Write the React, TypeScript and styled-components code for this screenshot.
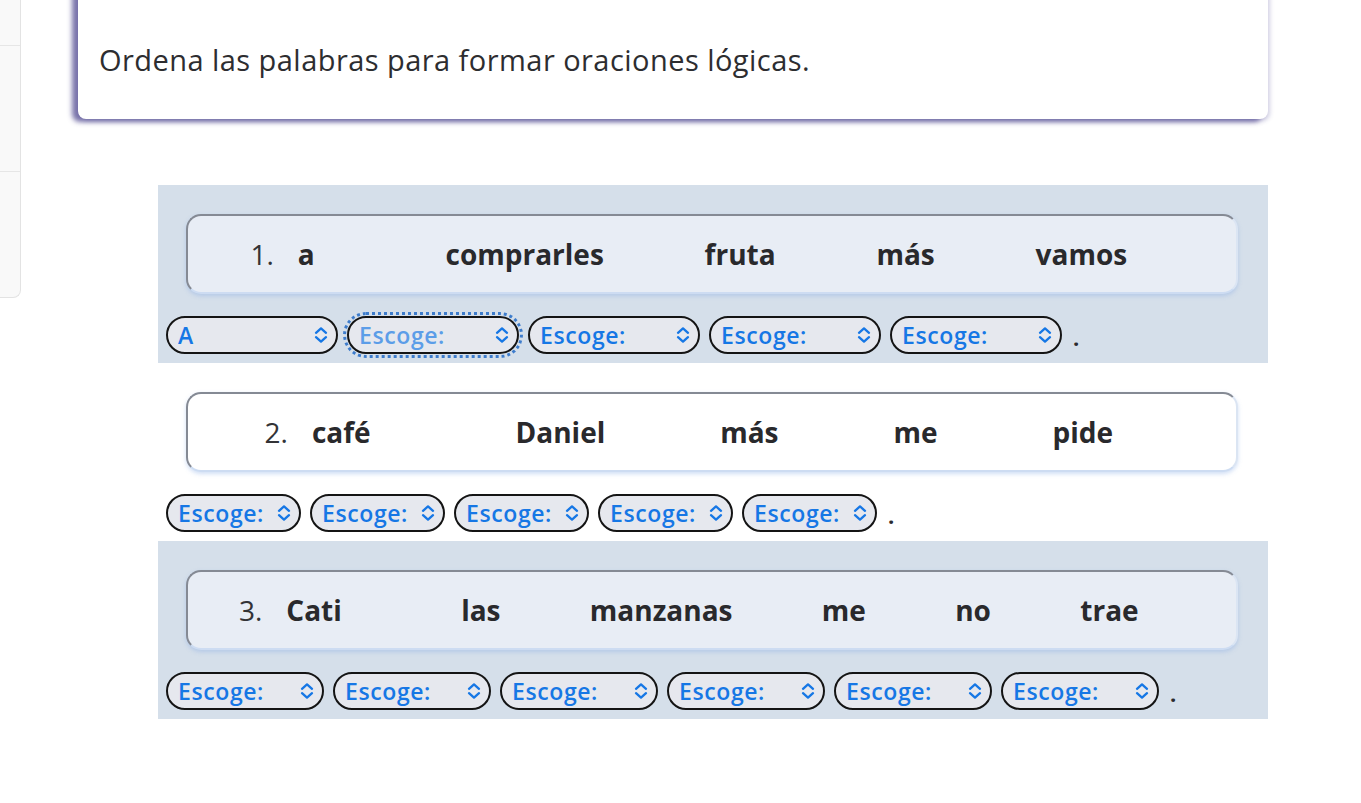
import React from "react";
import styled, { createGlobalStyle } from "styled-components";

interface Exercise {
  num: number;
  words: string[];
  picks: string[];
  selectWidth: number;
  shaded: boolean;
  focused?: number;
}

const exercises: Exercise[] = [
  {
    num: 1,
    words: ["a", "comprarles", "fruta", "más", "vamos"],
    picks: ["A", "Escoge:", "Escoge:", "Escoge:", "Escoge:"],
    selectWidth: 172,
    shaded: true,
    focused: 1,
  },
  {
    num: 2,
    words: ["café", "Daniel", "más", "me", "pide"],
    picks: ["Escoge:", "Escoge:", "Escoge:", "Escoge:", "Escoge:"],
    selectWidth: 135,
    shaded: false,
  },
  {
    num: 3,
    words: ["Cati", "las", "manzanas", "me", "no", "trae"],
    picks: ["Escoge:", "Escoge:", "Escoge:", "Escoge:", "Escoge:", "Escoge:"],
    selectWidth: 158,
    shaded: true,
  },
];

const capitalize = (w: string) => w.charAt(0).toUpperCase() + w.slice(1);

function Chevron() {
  return (
    <ChevronIcon viewBox="0 0 16 18" width="16" height="18">
      <path d="M3 6.8 L8 2.4 L13 6.8" />
      <path d="M3 11.2 L8 15.6 L13 11.2" />
    </ChevronIcon>
  );
}

function App() {
  return (
    <>
      <GlobalStyle />
      <Page>
        <Sidebar>
          <SideRow $h={46} />
          <SideRow $h={126} />
          <SideRow $h={126} $last />
        </Sidebar>
        <Main>
          <Instructions>
            Ordena las palabras para formar oraciones lógicas.
          </Instructions>
          <Exercises>
            {exercises.map((ex) => (
              <Item key={ex.num} $shaded={ex.shaded}>
                <WordBox $shaded={ex.shaded}>
                  <Words>
                    {ex.words.map((w, i) =>
                      i === 0 ? (
                        <FirstWord key={w}>
                          <Num>{ex.num}.</Num>
                          <Word>{w}</Word>
                        </FirstWord>
                      ) : (
                        <Word key={w}>{w}</Word>
                      )
                    )}
                  </Words>
                </WordBox>
                <Answers>
                  {ex.picks.map((p, i) => (
                    <SelectWrap key={i} $width={ex.selectWidth}>
                      <Picker
                        defaultValue={p}
                        $focused={ex.focused === i}
                        aria-label={`Palabra ${i + 1}`}
                      >
                        <option>Escoge:</option>
                        {ex.words.map((w) => (
                          <option key={w}>{capitalize(w)}</option>
                        ))}
                        {ex.words.map((w) => (
                          <option key={w + "-l"}>{w}</option>
                        ))}
                      </Picker>
                      <Chevron />
                    </SelectWrap>
                  ))}
                  <Period>.</Period>
                </Answers>
              </Item>
            ))}
          </Exercises>
        </Main>
      </Page>
    </>
  );
}

const GlobalStyle = createGlobalStyle`
  body {
    margin: 0;
    background: #ffffff;
    font-family: "Open Sans", "Liberation Sans", sans-serif;
    color: #2b2b2e;
    overflow: hidden;
  }
`;

const Page = styled.div`
  display: flex;
  align-items: flex-start;
  min-height: 803px;
`;

const Sidebar = styled.div`
  width: 20px;
  flex-shrink: 0;
  display: flex;
  flex-direction: column;
  background: #f9f9f9;
  border-right: 1px solid #e3e3e3;
  border-bottom: 1px solid #e3e3e3;
  border-bottom-right-radius: 8px;
`;

const SideRow = styled.div<{ $h: number; $last?: boolean }>`
  height: ${(p) => p.$h - 1}px;
  border-bottom: ${(p) => (p.$last ? "none" : "1px solid #e6e6e6")};
`;

const Main = styled.div`
  width: 1190px;
  margin-left: 57px;
  margin-top: -20px;
`;

const Instructions = styled.div`
  background: #ffffff;
  border-radius: 8px;
  padding: 61px 21px 40px;
  font-size: 29px;
  letter-spacing: 0.45px;
  line-height: 38px;
  color: #2d2d30;
  box-shadow: -6px 3px 5px rgba(66, 58, 136, 0.7), 2px 2px 4px rgba(80, 72, 150, 0.25);
`;

const Exercises = styled.div`
  margin: 66px 0 0 80px;
  width: 1110px;
`;

const Item = styled.div<{ $shaded: boolean }>`
  background: ${(p) => (p.$shaded ? "#d5dfea" : "#ffffff")};
  padding: 29px 0 9px;
`;

const WordBox = styled.div<{ $shaded: boolean }>`
  height: 80px;
  box-sizing: border-box;
  margin: 0 30px 0 28px;
  padding: 0 8px 0 9px;
  display: flex;
  align-items: center;
  border-radius: 15px;
  border-style: solid;
  border-width: 2px;
  border-color: #858a94 #dbe5f3 #cddcf2 #858a94;
  background: ${(p) => (p.$shaded ? "#e8edf5" : "#ffffff")};
  box-shadow: 0 2px 4px rgba(120, 160, 225, 0.35);
`;

const Words = styled.div`
  flex: 1;
  display: flex;
  justify-content: space-evenly;
  align-items: center;
`;

const FirstWord = styled.div`
  display: flex;
  align-items: baseline;
  margin-right: 30px;
`;

const Num = styled.span`
  width: 40px;
  margin-left: -64px;
  margin-right: 24px;
  text-align: right;
  font-size: 28px;
  font-weight: 400;
  color: #333336;
`;

const Word = styled.span`
  font-size: 28px;
  font-weight: 700;
  color: #29292c;
  white-space: nowrap;
`;

const Answers = styled.div`
  display: flex;
  align-items: center;
  gap: 9px;
  margin-top: 22px;
  padding-left: 8px;
`;

const SelectWrap = styled.div<{ $width: number }>`
  position: relative;
  width: ${(p) => p.$width}px;
  height: 38px;
  color: #1677e5;
`;

const Picker = styled.select<{ $focused: boolean }>`
  appearance: none;
  -webkit-appearance: none;
  width: 100%;
  height: 100%;
  box-sizing: border-box;
  border: 2px solid #141414;
  border-radius: 19px;
  background: #e6e8ee;
  padding: 0 30px 0 10px;
  font-family: "Open Sans", "Liberation Sans", sans-serif;
  font-size: 23px;
  font-weight: 600;
  letter-spacing: 0.6px;
  color: ${(p) => (p.$focused ? "#5c9de8" : "#1677e5")};
  outline: ${(p) => (p.$focused ? "3px dotted #3d7ccc" : "none")};
  outline-offset: 1px;
`;

const ChevronIcon = styled.svg`
  position: absolute;
  right: 9px;
  top: 10px;
  pointer-events: none;
  fill: none;
  stroke: currentColor;
  stroke-width: 2.3;
  stroke-linecap: round;
  stroke-linejoin: round;
`;

const Period = styled.span`
  margin-left: 2px;
  font-size: 22px;
  font-weight: 700;
  color: #2b2b2e;
  line-height: 22px;
  padding-top: 4px;
`;

export default App;
